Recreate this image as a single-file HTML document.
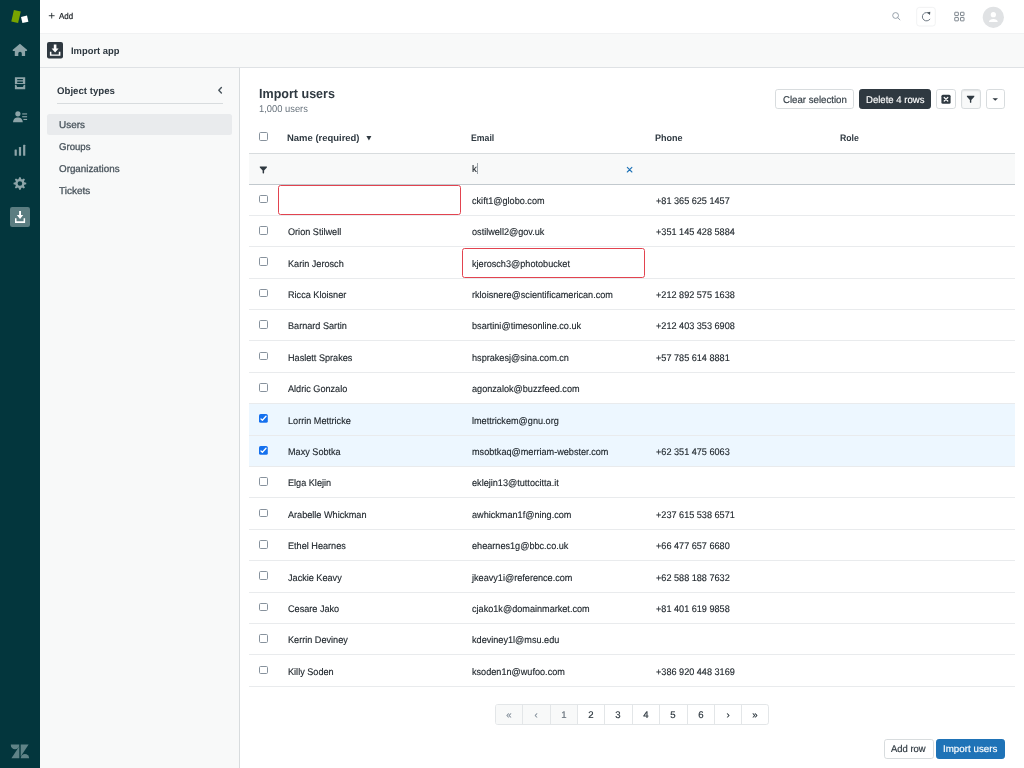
<!DOCTYPE html>
<html><head><meta charset="utf-8">
<style>
*{box-sizing:border-box;margin:0;padding:0}
html,body{width:1024px;height:768px;overflow:hidden;background:#fff;font-family:"Liberation Sans",sans-serif;color:#2f3941}
.a{position:absolute}
.t{position:absolute;white-space:nowrap;transform-origin:0 0;text-rendering:geometricPrecision}
#nav{position:absolute;left:0;top:0;width:40px;height:768px;background:#03363d}
#hdr{position:absolute;left:40px;top:0;width:984px;height:32px;background:#fff}
#sub{position:absolute;left:40px;top:32.6px;width:984px;height:35.2px;background:#f8f9f9;border-top:0.6px solid #f1f2f3;border-bottom:1px solid #dfe2e5}
#side{position:absolute;left:40px;top:67.8px;width:200px;height:701px;background:#f8f9f9;border-right:1px solid #d8dcde}
.row{position:absolute;left:249px;width:766px;border-bottom:1px solid #e9ebed}
.cb{position:absolute;left:259.2px;width:8.7px;height:8.7px;border:1px solid #87929d;border-radius:1.6px;background:#fff}
.cb.on{border:none}
.err{position:absolute;width:183px;height:30px;border:1px solid #e2434f;border-radius:2.6px;background:#fff}
.btn{position:absolute;border:1px solid #d8dcde;border-radius:2.8px;background:#fff}
#root{position:absolute;left:0;top:0;width:1024px;height:768px;will-change:transform}
</style></head><body><div id="root">
<div id="nav">
  <!-- logo -->
  <svg class="a" style="left:0;top:0" width="40" height="40" viewBox="0 0 40 40">
    <polygon points="13.9,10.0 20.8,11.6 18.1,23.0 11.3,21.4" fill="#78a300"/>
    <polygon points="21.0,17.0 27.0,15.6 28.4,21.7 22.4,23.1" fill="#fff"/>
  </svg>
  <!-- home -->
  <svg class="a" style="left:0;top:0" width="40" height="768" viewBox="0 0 40 768">
    <g fill="#8da4a8">
      <!-- home -->
      <path d="M19.9 43.7 L27.0 49.8 Q27.6 50.9 26.6 51.0 L25.1 51.0 V56.1 H21.8 V53.5 A1.75 1.75 0 0 0 18.3 53.5 V56.1 H14.8 V51.0 H13.2 Q12.2 50.9 12.8 49.8 Z"/>
      <!-- views/inbox -->
      <path fill-rule="evenodd" d="M14.9 77.2 H25.2 V84.1 H14.9 Z M17.2 79.0 H22.9 V80.2 H17.2 Z M17.2 81.5 H22.9 V82.9 H17.2 Z"/>
      <path d="M14.9 84.7 H16.3 L17.1 87.0 H23.0 L23.8 84.7 H25.2 V89.3 H14.9 Z"/>
      <!-- customers -->
      <circle cx="17.9" cy="113.8" r="2.6"/>
      <path d="M13 122.2 C13.4 118.6 15.2 117.4 17.9 117.4 C20.6 117.4 22.4 118.6 22.8 122.2 Z"/>
      <rect x="22.2" y="113.4" width="4.9" height="1.1"/>
      <rect x="22.2" y="116.2" width="4.9" height="1.1"/>
      <rect x="23.4" y="118.9" width="3.7" height="1.1"/>
      <!-- reporting -->
      <rect x="14.6" y="149.5" width="2.2" height="6.2" rx="0.5"/>
      <rect x="18.9" y="147" width="2.2" height="8.7" rx="0.5"/>
      <rect x="23.1" y="144.8" width="2.2" height="10.9" rx="0.5"/>
      <!-- settings gear -->
      <path fill-rule="evenodd" d="M18.56 179.10 L19.12 177.15 L20.68 177.15 L21.24 179.10 L22.06 179.44 L23.84 178.46 L24.94 179.56 L23.96 181.34 L24.30 182.16 L26.25 182.72 L26.25 184.28 L24.30 184.84 L23.96 185.66 L24.94 187.44 L23.84 188.54 L22.06 187.56 L21.24 187.90 L20.68 189.85 L19.12 189.85 L18.56 187.90 L17.74 187.56 L15.96 188.54 L14.86 187.44 L15.84 185.66 L15.50 184.84 L13.55 184.28 L13.55 182.72 L15.50 182.16 L15.84 181.34 L14.86 179.56 L15.96 178.46 L17.74 179.44 Z M19.9 181.2 A2.3 2.3 0 1 0 19.9 185.8 A2.3 2.3 0 1 0 19.9 181.2 Z"/>
    </g>
    <!-- import selected -->
    <rect x="10" y="207" width="20" height="20" rx="2.2" fill="#5b7d81"/>
    <g fill="#fff">
      <path d="M19.1 211.0 H21.0 V214.9 H23.2 L20.05 219.0 L16.8 214.9 H19.1 Z"/>
      <path d="M15.0 218.2 H16.5 V221.2 H23.6 V218.2 H25.1 V222.9 H15.0 Z"/>
    </g>
    <!-- zendesk Z -->
    <g fill="#5f8387">
      <path d="M10.8 744.4 H19.3 V745 A4.25 4.25 0 0 1 15 749.3 A4.25 4.25 0 0 1 10.8 745 Z" transform="translate(0,0)"/>
      <path d="M19.3 746.2 V758.2 H11.4 Z"/>
      <path d="M20.7 744.4 H28.6 L20.7 756.4 Z"/>
      <path d="M20.7 758.2 A4.25 4.25 0 0 1 29.2 758.2 Z"/>
    </g>
  </svg>
</div>

<div id="hdr">
  <svg class="a" style="left:8px;top:11.9px" width="8" height="8" viewBox="0 0 8 8"><path d="M3.7 0.9 V6.5 M0.8 3.7 H6.6" stroke="#1f262b" stroke-width="0.85"/></svg>
</div>
<svg class="a" style="left:880px;top:0" width="144" height="32" viewBox="880 0 144 32">
  <!-- search -->
  <circle cx="895.6" cy="15.5" r="2.9" stroke="#87929d" stroke-width="0.85" fill="none"/>
  <path d="M897.8 17.7 L899.9 19.8" stroke="#87929d" stroke-width="0.9" stroke-linecap="round"/>
  <!-- refresh btn -->
  <rect x="916.7" y="7.4" width="18.6" height="18.6" rx="2.6" fill="#fff" stroke="#edeff0" stroke-width="0.8"/>
  <path d="M929.4 13.6 A4.2 4.2 0 1 0 929.9 19.3" stroke="#68737d" stroke-width="0.95" fill="none" stroke-linecap="round"/>
  <path d="M927.0 12.6 L930.3 11.8 L930.0 15.1 Z" fill="#49545c"/>
  <!-- grid -->
  <g stroke="#5f6a73" stroke-width="0.8" fill="none">
    <rect x="954.75" y="12.25" width="3.6" height="3.3" rx="0.4"/>
    <rect x="960.5" y="12.25" width="3.5" height="3.3" rx="0.4"/>
    <rect x="954.75" y="17.45" width="3.6" height="3.4" rx="0.4"/>
    <rect x="960.5" y="17.45" width="3.5" height="3.4" rx="0.4"/>
  </g>
  <!-- avatar -->
  <circle cx="993.35" cy="17.3" r="10.6" fill="#e0e2e4"/>
  <circle cx="993.35" cy="14.7" r="2.6" fill="#fff"/>
  <path d="M988.9 21.9 C989.3 19.6 991 18.9 993.35 18.9 C995.7 18.9 997.4 19.6 997.8 21.9 Z" fill="#fff"/>
</svg>

<div id="sub">
  <svg class="a" style="left:7px;top:8.5px" width="16" height="17" viewBox="0 0 16 17">
    <rect x="0" y="0" width="16" height="16.5" rx="2" fill="#2f3941"/>
    <path d="M6.8 2.6 H9.4 V6.4 H11.6 L8.1 10.6 L4.6 6.4 H6.8 Z" fill="#fff"/>
    <path d="M2.9 9.7 H4.4 V12.4 H11.8 V9.7 H13.4 V13.8 H2.9 Z" fill="#fff"/>
  </svg>
</div>

<div id="side">
  <div class="a" style="left:17px;top:35.3px;width:166px;height:1px;background:#d8dcde"></div>
  <div class="a" style="left:7.4px;top:45.9px;width:184.6px;height:21.6px;background:#e9ebed;border-radius:2.5px"></div>
  <svg class="a" style="left:176.3px;top:18.4px" width="8" height="9" viewBox="0 0 8 9"><path d="M5.4 1.4 L2.8 4.2 L5.4 7" stroke="#49545c" stroke-width="1.4" fill="none" stroke-linecap="round" stroke-linejoin="round"/></svg>
</div>

<!-- top right buttons -->
<div class="btn" style="left:775.4px;top:89.4px;width:78.4px;height:19.8px"></div>
<div class="btn" style="left:858.9px;top:89.4px;width:72.2px;height:19.8px;background:#2f3941;border-color:#2f3941"></div>
<div class="btn" style="left:936.3px;top:89.4px;width:19.4px;height:19.8px"></div>
<div class="btn" style="left:961px;top:89.4px;width:19.5px;height:19.8px;background:#f8f9f9;box-shadow:inset 0 1px 1.5px rgba(47,57,65,.12)"></div>
<div class="btn" style="left:985.5px;top:89.4px;width:19.5px;height:19.8px"></div>
<svg class="a" style="left:930px;top:85px" width="90" height="30" viewBox="930 85 90 30">
  <rect x="941.4" y="94.7" width="9.2" height="9.1" rx="1.5" fill="#2f3941"/>
  <path d="M944.2 97.5 L947.8 101 M947.8 97.5 L944.2 101" stroke="#fff" stroke-width="1.2" stroke-linecap="round"/>
  <path d="M966.9 95.8 H974.3 V96.7 L971.3 99.9 V102.2 Q971.3 102.8 970.7 102.8 H970.5 Q969.9 102.8 969.9 102.2 V99.9 L966.9 96.7 Z" fill="#2f3941"/>
  <path d="M992.5 98.3 H998 L995.25 100.8 Z" fill="#2f3941"/>
</svg>

<!-- table header -->
<div class="a" style="left:249px;top:153px;width:766px;height:1px;background:#d8dcde"></div>
<div class="a" style="left:249px;top:154px;width:766px;height:30.4px;background:#f8f9f9"></div>
<div class="cb" style="top:132.1px"></div>
<svg class="a" style="left:360px;top:130px" width="20" height="15" viewBox="360 130 20 15">
  <path d="M366.4 136.0 H371.4 L368.9 140.4 Z" fill="#2f3941"/>
</svg>
<svg class="a" style="left:255px;top:160px" width="20" height="20" viewBox="255 160 20 20">
  <path d="M259.8 166.6 H266.9 V167.4 L264.1 170.5 V172.8 Q264.1 173.4 263.5 173.4 H263.2 Q262.6 173.4 262.6 172.8 V170.5 L259.8 167.4 Z" fill="#2f3941"/>
</svg>
<div class="a" style="left:476.8px;top:163.3px;width:1px;height:10.5px;background:#9aa2a8"></div>
<svg class="a" style="left:620px;top:160px" width="20" height="20" viewBox="620 160 20 20">
  <path d="M627.3 167.4 L631.9 172.0 M631.9 167.4 L627.3 172.0" stroke="#1f73b7" stroke-width="1.1" stroke-linecap="round"/>
</svg>

<div class="row" style="top:184.400px;height:31.400px;background:#fff"></div>
<div class="cb" style="top:194.60px"></div>
<div class="err" style="left:278px;top:185.00px"></div>
<div class="t" style="left:472.00px;top:196.71px;font-size:9.600px;line-height:10.723px;color:#1e252b;font-weight:400;transform:scaleX(0.9500);-webkit-text-stroke:0.15px #1e252b">ckift1@globo.com</div>
<div class="t" style="left:656.30px;top:196.71px;font-size:9.600px;line-height:10.723px;color:#1e252b;font-weight:400;transform:scaleX(0.9500);-webkit-text-stroke:0.15px #1e252b">+81 365 625 1457</div>
<div class="row" style="top:215.800px;height:31.400px;background:#fff"></div>
<div class="cb" style="top:226.00px"></div>
<div class="t" style="left:288.30px;top:228.11px;font-size:9.600px;line-height:10.723px;color:#1e252b;font-weight:400;transform:scaleX(0.9500);-webkit-text-stroke:0.15px #1e252b">Orion Stilwell</div>
<div class="t" style="left:472.00px;top:228.11px;font-size:9.600px;line-height:10.723px;color:#1e252b;font-weight:400;transform:scaleX(0.9500);-webkit-text-stroke:0.15px #1e252b">ostilwell2@gov.uk</div>
<div class="t" style="left:656.30px;top:228.11px;font-size:9.600px;line-height:10.723px;color:#1e252b;font-weight:400;transform:scaleX(0.9500);-webkit-text-stroke:0.15px #1e252b">+351 145 428 5884</div>
<div class="row" style="top:247.200px;height:31.400px;background:#fff"></div>
<div class="cb" style="top:257.40px"></div>
<div class="t" style="left:288.30px;top:259.51px;font-size:9.600px;line-height:10.723px;color:#1e252b;font-weight:400;transform:scaleX(0.9500);-webkit-text-stroke:0.15px #1e252b">Karin Jerosch</div>
<div class="err" style="left:462px;top:247.80px"></div>
<div class="t" style="left:472.00px;top:259.51px;font-size:9.600px;line-height:10.723px;color:#1e252b;font-weight:400;transform:scaleX(0.9500);-webkit-text-stroke:0.15px #1e252b">kjerosch3@photobucket</div>
<div class="row" style="top:278.600px;height:31.400px;background:#fff"></div>
<div class="cb" style="top:288.80px"></div>
<div class="t" style="left:288.30px;top:290.91px;font-size:9.600px;line-height:10.723px;color:#1e252b;font-weight:400;transform:scaleX(0.9500);-webkit-text-stroke:0.15px #1e252b">Ricca Kloisner</div>
<div class="t" style="left:472.00px;top:290.91px;font-size:9.600px;line-height:10.723px;color:#1e252b;font-weight:400;transform:scaleX(0.9500);-webkit-text-stroke:0.15px #1e252b">rkloisnere@scientificamerican.com</div>
<div class="t" style="left:656.30px;top:290.91px;font-size:9.600px;line-height:10.723px;color:#1e252b;font-weight:400;transform:scaleX(0.9500);-webkit-text-stroke:0.15px #1e252b">+212 892 575 1638</div>
<div class="row" style="top:310.000px;height:31.400px;background:#fff"></div>
<div class="cb" style="top:320.20px"></div>
<div class="t" style="left:288.30px;top:322.31px;font-size:9.600px;line-height:10.723px;color:#1e252b;font-weight:400;transform:scaleX(0.9500);-webkit-text-stroke:0.15px #1e252b">Barnard Sartin</div>
<div class="t" style="left:472.00px;top:322.31px;font-size:9.600px;line-height:10.723px;color:#1e252b;font-weight:400;transform:scaleX(0.9500);-webkit-text-stroke:0.15px #1e252b">bsartini@timesonline.co.uk</div>
<div class="t" style="left:656.30px;top:322.31px;font-size:9.600px;line-height:10.723px;color:#1e252b;font-weight:400;transform:scaleX(0.9500);-webkit-text-stroke:0.15px #1e252b">+212 403 353 6908</div>
<div class="row" style="top:341.400px;height:31.400px;background:#fff"></div>
<div class="cb" style="top:351.60px"></div>
<div class="t" style="left:288.30px;top:353.71px;font-size:9.600px;line-height:10.723px;color:#1e252b;font-weight:400;transform:scaleX(0.9500);-webkit-text-stroke:0.15px #1e252b">Haslett Sprakes</div>
<div class="t" style="left:472.00px;top:353.71px;font-size:9.600px;line-height:10.723px;color:#1e252b;font-weight:400;transform:scaleX(0.9500);-webkit-text-stroke:0.15px #1e252b">hsprakesj@sina.com.cn</div>
<div class="t" style="left:656.30px;top:353.71px;font-size:9.600px;line-height:10.723px;color:#1e252b;font-weight:400;transform:scaleX(0.9500);-webkit-text-stroke:0.15px #1e252b">+57 785 614 8881</div>
<div class="row" style="top:372.800px;height:31.400px;background:#fff"></div>
<div class="cb" style="top:383.00px"></div>
<div class="t" style="left:288.30px;top:385.11px;font-size:9.600px;line-height:10.723px;color:#1e252b;font-weight:400;transform:scaleX(0.9500);-webkit-text-stroke:0.15px #1e252b">Aldric Gonzalo</div>
<div class="t" style="left:472.00px;top:385.11px;font-size:9.600px;line-height:10.723px;color:#1e252b;font-weight:400;transform:scaleX(0.9500);-webkit-text-stroke:0.15px #1e252b">agonzalok@buzzfeed.com</div>
<div class="row" style="top:404.200px;height:31.400px;background:#edf7ff"></div>
<div class="cb on" style="top:414.40px"><svg width="9" height="9" viewBox="0 0 9 9" style="position:absolute;left:0;top:0"><rect x="0" y="0" width="8.8" height="8.8" rx="1.6" fill="#1470ee"/><path d="M2.0 5.0 L3.4 6.3 L7.0 2.3" stroke="#fff" stroke-width="1.3" fill="none" stroke-linecap="round" stroke-linejoin="round"/></svg></div>
<div class="t" style="left:288.30px;top:416.51px;font-size:9.600px;line-height:10.723px;color:#1e252b;font-weight:400;transform:scaleX(0.9500);-webkit-text-stroke:0.15px #1e252b">Lorrin Mettricke</div>
<div class="t" style="left:472.00px;top:416.51px;font-size:9.600px;line-height:10.723px;color:#1e252b;font-weight:400;transform:scaleX(0.9500);-webkit-text-stroke:0.15px #1e252b">lmettrickem@gnu.org</div>
<div class="row" style="top:435.600px;height:31.400px;background:#edf7ff"></div>
<div class="cb on" style="top:445.80px"><svg width="9" height="9" viewBox="0 0 9 9" style="position:absolute;left:0;top:0"><rect x="0" y="0" width="8.8" height="8.8" rx="1.6" fill="#1470ee"/><path d="M2.0 5.0 L3.4 6.3 L7.0 2.3" stroke="#fff" stroke-width="1.3" fill="none" stroke-linecap="round" stroke-linejoin="round"/></svg></div>
<div class="t" style="left:288.30px;top:447.91px;font-size:9.600px;line-height:10.723px;color:#1e252b;font-weight:400;transform:scaleX(0.9500);-webkit-text-stroke:0.15px #1e252b">Maxy Sobtka</div>
<div class="t" style="left:472.00px;top:447.91px;font-size:9.600px;line-height:10.723px;color:#1e252b;font-weight:400;transform:scaleX(0.9500);-webkit-text-stroke:0.15px #1e252b">msobtkaq@merriam-webster.com</div>
<div class="t" style="left:656.30px;top:447.91px;font-size:9.600px;line-height:10.723px;color:#1e252b;font-weight:400;transform:scaleX(0.9500);-webkit-text-stroke:0.15px #1e252b">+62 351 475 6063</div>
<div class="row" style="top:467.000px;height:31.400px;background:#fff"></div>
<div class="cb" style="top:477.20px"></div>
<div class="t" style="left:288.30px;top:479.31px;font-size:9.600px;line-height:10.723px;color:#1e252b;font-weight:400;transform:scaleX(0.9500);-webkit-text-stroke:0.15px #1e252b">Elga Klejin</div>
<div class="t" style="left:472.00px;top:479.31px;font-size:9.600px;line-height:10.723px;color:#1e252b;font-weight:400;transform:scaleX(0.9500);-webkit-text-stroke:0.15px #1e252b">eklejin13@tuttocitta.it</div>
<div class="row" style="top:498.400px;height:31.400px;background:#fff"></div>
<div class="cb" style="top:508.60px"></div>
<div class="t" style="left:288.30px;top:510.71px;font-size:9.600px;line-height:10.723px;color:#1e252b;font-weight:400;transform:scaleX(0.9500);-webkit-text-stroke:0.15px #1e252b">Arabelle Whickman</div>
<div class="t" style="left:472.00px;top:510.71px;font-size:9.600px;line-height:10.723px;color:#1e252b;font-weight:400;transform:scaleX(0.9500);-webkit-text-stroke:0.15px #1e252b">awhickman1f@ning.com</div>
<div class="t" style="left:656.30px;top:510.71px;font-size:9.600px;line-height:10.723px;color:#1e252b;font-weight:400;transform:scaleX(0.9500);-webkit-text-stroke:0.15px #1e252b">+237 615 538 6571</div>
<div class="row" style="top:529.800px;height:31.400px;background:#fff"></div>
<div class="cb" style="top:540.00px"></div>
<div class="t" style="left:288.30px;top:542.11px;font-size:9.600px;line-height:10.723px;color:#1e252b;font-weight:400;transform:scaleX(0.9500);-webkit-text-stroke:0.15px #1e252b">Ethel Hearnes</div>
<div class="t" style="left:472.00px;top:542.11px;font-size:9.600px;line-height:10.723px;color:#1e252b;font-weight:400;transform:scaleX(0.9500);-webkit-text-stroke:0.15px #1e252b">ehearnes1g@bbc.co.uk</div>
<div class="t" style="left:656.30px;top:542.11px;font-size:9.600px;line-height:10.723px;color:#1e252b;font-weight:400;transform:scaleX(0.9500);-webkit-text-stroke:0.15px #1e252b">+66 477 657 6680</div>
<div class="row" style="top:561.200px;height:31.400px;background:#fff"></div>
<div class="cb" style="top:571.40px"></div>
<div class="t" style="left:288.30px;top:573.51px;font-size:9.600px;line-height:10.723px;color:#1e252b;font-weight:400;transform:scaleX(0.9500);-webkit-text-stroke:0.15px #1e252b">Jackie Keavy</div>
<div class="t" style="left:472.00px;top:573.51px;font-size:9.600px;line-height:10.723px;color:#1e252b;font-weight:400;transform:scaleX(0.9500);-webkit-text-stroke:0.15px #1e252b">jkeavy1i@reference.com</div>
<div class="t" style="left:656.30px;top:573.51px;font-size:9.600px;line-height:10.723px;color:#1e252b;font-weight:400;transform:scaleX(0.9500);-webkit-text-stroke:0.15px #1e252b">+62 588 188 7632</div>
<div class="row" style="top:592.600px;height:31.400px;background:#fff"></div>
<div class="cb" style="top:602.80px"></div>
<div class="t" style="left:288.30px;top:604.91px;font-size:9.600px;line-height:10.723px;color:#1e252b;font-weight:400;transform:scaleX(0.9500);-webkit-text-stroke:0.15px #1e252b">Cesare Jako</div>
<div class="t" style="left:472.00px;top:604.91px;font-size:9.600px;line-height:10.723px;color:#1e252b;font-weight:400;transform:scaleX(0.9500);-webkit-text-stroke:0.15px #1e252b">cjako1k@domainmarket.com</div>
<div class="t" style="left:656.30px;top:604.91px;font-size:9.600px;line-height:10.723px;color:#1e252b;font-weight:400;transform:scaleX(0.9500);-webkit-text-stroke:0.15px #1e252b">+81 401 619 9858</div>
<div class="row" style="top:624.000px;height:31.400px;background:#fff"></div>
<div class="cb" style="top:634.20px"></div>
<div class="t" style="left:288.30px;top:636.31px;font-size:9.600px;line-height:10.723px;color:#1e252b;font-weight:400;transform:scaleX(0.9500);-webkit-text-stroke:0.15px #1e252b">Kerrin Deviney</div>
<div class="t" style="left:472.00px;top:636.31px;font-size:9.600px;line-height:10.723px;color:#1e252b;font-weight:400;transform:scaleX(0.9500);-webkit-text-stroke:0.15px #1e252b">kdeviney1l@msu.edu</div>
<div class="row" style="top:655.400px;height:31.400px;background:#fff"></div>
<div class="cb" style="top:665.60px"></div>
<div class="t" style="left:288.30px;top:667.71px;font-size:9.600px;line-height:10.723px;color:#1e252b;font-weight:400;transform:scaleX(0.9500);-webkit-text-stroke:0.15px #1e252b">Killy Soden</div>
<div class="t" style="left:472.00px;top:667.71px;font-size:9.600px;line-height:10.723px;color:#1e252b;font-weight:400;transform:scaleX(0.9500);-webkit-text-stroke:0.15px #1e252b">ksoden1n@wufoo.com</div>
<div class="t" style="left:656.30px;top:667.71px;font-size:9.600px;line-height:10.723px;color:#1e252b;font-weight:400;transform:scaleX(0.9500);-webkit-text-stroke:0.15px #1e252b">+386 920 448 3169</div>
<div class="a" style="left:249px;top:183.9px;z-index:3;width:766px;height:1px;background:#c2c9ce"></div>


<!-- pagination -->
<div class="a" style="left:495.4px;top:704.4px;width:273.5px;height:20.2px;border:1px solid #e3e6e8;border-radius:2.8px;overflow:hidden;background:#fff">
  <div class="a" style="left:0;top:0;width:81px;height:100%;background:#f8f9f9"></div>
  <div class="a" style="left:26.05px;top:0;width:1px;height:100%;background:#e3e6e8"></div>
  <div class="a" style="left:53.40px;top:0;width:1px;height:100%;background:#e3e6e8"></div>
  <div class="a" style="left:80.75px;top:0;width:1px;height:100%;background:#e3e6e8"></div>
  <div class="a" style="left:108.10px;top:0;width:1px;height:100%;background:#e3e6e8"></div>
  <div class="a" style="left:135.45px;top:0;width:1px;height:100%;background:#e3e6e8"></div>
  <div class="a" style="left:162.80px;top:0;width:1px;height:100%;background:#e3e6e8"></div>
  <div class="a" style="left:190.15px;top:0;width:1px;height:100%;background:#e3e6e8"></div>
  <div class="a" style="left:217.50px;top:0;width:1px;height:100%;background:#e3e6e8"></div>
  <div class="a" style="left:244.85px;top:0;width:1px;height:100%;background:#e3e6e8"></div>
</div>
<div id="pg"></div>

<!-- bottom buttons -->
<div class="btn" style="left:884.2px;top:738.6px;width:49.9px;height:20.1px"></div>
<div class="btn" style="left:936.1px;top:738.6px;width:69.2px;height:20.2px;background:#1f73b7;border-color:#1f73b7"></div>

<div class="t" style="left:59.00px;top:12.32px;font-size:8.600px;line-height:9.606px;color:#1a1f23;font-weight:400;transform:scaleX(0.9214);-webkit-text-stroke:0.2px #1a1f23">Add</div>
<div class="t" style="left:70.80px;top:47.00px;font-size:9.500px;line-height:10.611px;color:#2f3941;font-weight:700;transform:scaleX(0.9861);">Import app</div>
<div class="t" style="left:57.10px;top:87.02px;font-size:9.700px;line-height:10.835px;color:#2f3941;font-weight:700;transform:scaleX(0.9962);">Object types</div>
<div class="t" style="left:59.20px;top:119.54px;font-size:9.900px;line-height:11.058px;color:#49545c;font-weight:400;transform:scaleX(1.0057);-webkit-text-stroke:0.3px #49545c">Users</div>
<div class="t" style="left:59.20px;top:141.54px;font-size:9.900px;line-height:11.058px;color:#49545c;font-weight:400;transform:scaleX(0.9734);-webkit-text-stroke:0.3px #49545c">Groups</div>
<div class="t" style="left:59.20px;top:164.44px;font-size:9.900px;line-height:11.058px;color:#49545c;font-weight:400;transform:scaleX(0.9937);-webkit-text-stroke:0.3px #49545c">Organizations</div>
<div class="t" style="left:59.20px;top:185.94px;font-size:9.900px;line-height:11.058px;color:#49545c;font-weight:400;transform:scaleX(1.0134);-webkit-text-stroke:0.3px #49545c">Tickets</div>
<div class="t" style="left:259.30px;top:86.85px;font-size:13.200px;line-height:14.744px;color:#2f3941;font-weight:700;transform:scaleX(0.9505);">Import users</div>
<div class="t" style="left:259.10px;top:103.54px;font-size:9.900px;line-height:11.058px;color:#68737d;font-weight:400;transform:scaleX(0.9472);">1,000 users</div>
<div class="t" style="left:783.10px;top:95.14px;font-size:9.900px;line-height:11.058px;color:#3a444c;font-weight:400;transform:scaleX(0.9774);-webkit-text-stroke:0.2px #3a444c">Clear selection</div>
<div class="t" style="left:865.60px;top:95.14px;font-size:9.900px;line-height:11.058px;color:#fff;font-weight:400;transform:scaleX(0.9682);-webkit-text-stroke:0.15px #fff">Delete 4 rows</div>
<div class="t" style="left:286.90px;top:132.69px;font-size:9.400px;line-height:10.500px;color:#2f3941;font-weight:700;transform:scaleX(1.0085);">Name (required)</div>
<div class="t" style="left:471.05px;top:132.69px;font-size:9.400px;line-height:10.500px;color:#2f3941;font-weight:700;transform:scaleX(0.9291);">Email</div>
<div class="t" style="left:655.10px;top:132.69px;font-size:9.400px;line-height:10.500px;color:#2f3941;font-weight:700;transform:scaleX(0.9644);">Phone</div>
<div class="t" style="left:839.90px;top:132.69px;font-size:9.400px;line-height:10.500px;color:#2f3941;font-weight:700;transform:scaleX(0.9278);">Role</div>
<div class="t" style="left:472.20px;top:165.11px;font-size:9.600px;line-height:10.723px;color:#1e252b;font-weight:400;transform:scaleX(1.0001);-webkit-text-stroke:0.15px #1e252b">k</div>
<div class="t" style="left:891.20px;top:744.53px;font-size:9.800px;line-height:10.947px;color:#2f3941;font-weight:400;transform:scaleX(0.9624);-webkit-text-stroke:0.2px #2f3941">Add row</div>
<div class="t" style="left:943.40px;top:744.53px;font-size:9.800px;line-height:10.947px;color:#fff;font-weight:400;transform:scaleX(0.9989);-webkit-text-stroke:0.15px #fff">Import users</div>
<div class="t" style="left:496.07px;width:26px;text-align:center;top:710.61px;font-size:9.6px;line-height:10.723px;color:#87929d;-webkit-text-stroke:0.2px #87929d;transform:scaleX(1.0001)">&laquo;</div>
<div class="t" style="left:523.42px;width:26px;text-align:center;top:710.61px;font-size:9.6px;line-height:10.723px;color:#87929d;-webkit-text-stroke:0.2px #87929d;transform:scaleX(1.0001)">&lsaquo;</div>
<div class="t" style="left:550.77px;width:26px;text-align:center;top:710.61px;font-size:9.6px;line-height:10.723px;color:#68737d;-webkit-text-stroke:0.2px #68737d;transform:scaleX(1.0001)">1</div>
<div class="t" style="left:578.12px;width:26px;text-align:center;top:710.61px;font-size:9.6px;line-height:10.723px;color:#2f3941;-webkit-text-stroke:0.2px #2f3941;transform:scaleX(1.0001)">2</div>
<div class="t" style="left:605.48px;width:26px;text-align:center;top:710.61px;font-size:9.6px;line-height:10.723px;color:#2f3941;-webkit-text-stroke:0.2px #2f3941;transform:scaleX(1.0001)">3</div>
<div class="t" style="left:632.83px;width:26px;text-align:center;top:710.61px;font-size:9.6px;line-height:10.723px;color:#2f3941;-webkit-text-stroke:0.2px #2f3941;transform:scaleX(1.0001)">4</div>
<div class="t" style="left:660.17px;width:26px;text-align:center;top:710.61px;font-size:9.6px;line-height:10.723px;color:#2f3941;-webkit-text-stroke:0.2px #2f3941;transform:scaleX(1.0001)">5</div>
<div class="t" style="left:687.52px;width:26px;text-align:center;top:710.61px;font-size:9.6px;line-height:10.723px;color:#2f3941;-webkit-text-stroke:0.2px #2f3941;transform:scaleX(1.0001)">6</div>
<div class="t" style="left:714.88px;width:26px;text-align:center;top:710.61px;font-size:9.6px;line-height:10.723px;color:#2f3941;-webkit-text-stroke:0.2px #2f3941;transform:scaleX(1.0001)">&rsaquo;</div>
<div class="t" style="left:742.22px;width:26px;text-align:center;top:710.61px;font-size:9.6px;line-height:10.723px;color:#2f3941;-webkit-text-stroke:0.2px #2f3941;transform:scaleX(1.0001)">&raquo;</div>
</div></body></html>
